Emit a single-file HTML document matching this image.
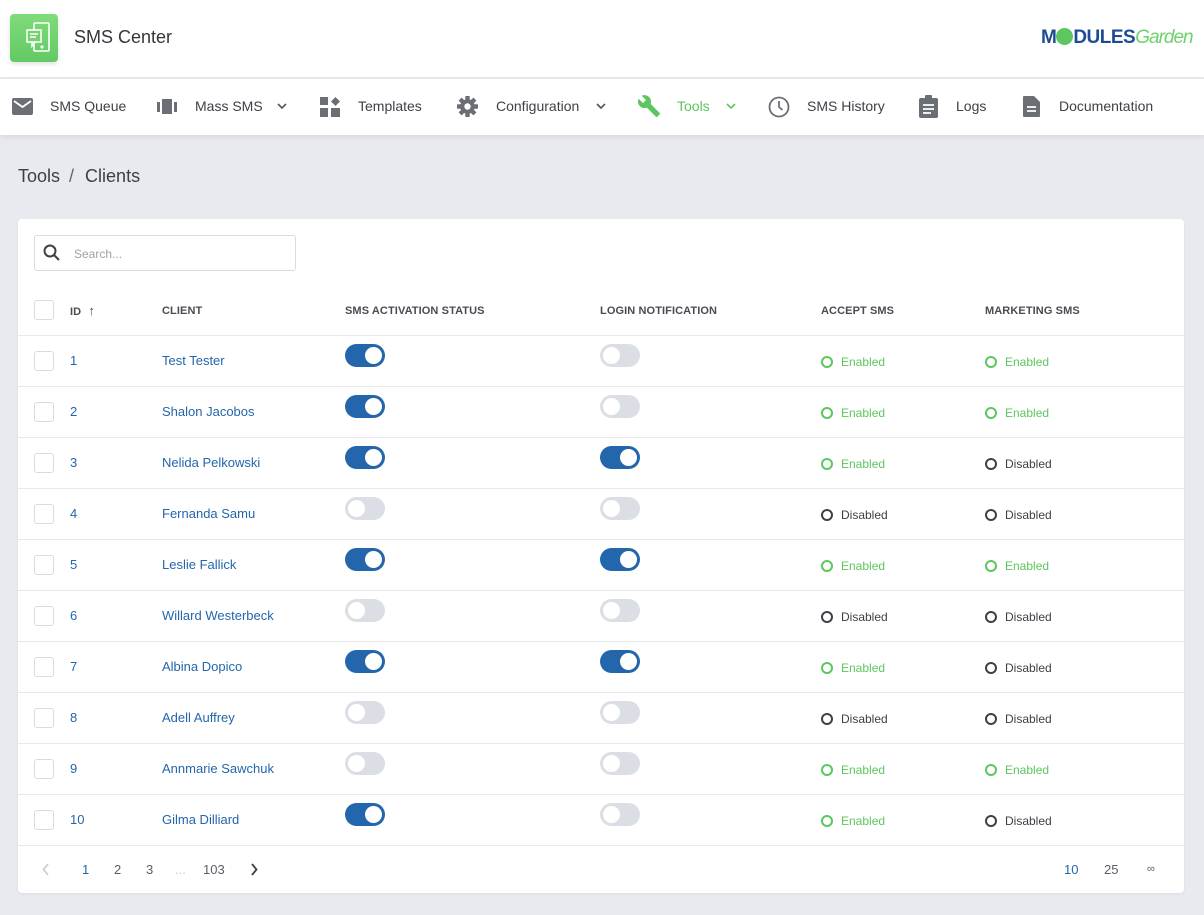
<!DOCTYPE html>
<html><head><meta charset="utf-8"><style>
*{box-sizing:border-box;margin:0;padding:0}
body{width:1204px;height:915px;background:#e9eaef;font-family:"Liberation Sans",Arial,sans-serif;position:relative;overflow:hidden;color:#3d4147}
.hdr{position:absolute;left:0;top:0;width:1204px;height:78px;background:#fff;border-bottom:1px solid #e8e9ec}
.nav{position:absolute;left:0;top:79px;width:1204px;height:56px;background:#fff;box-shadow:0 2px 6px rgba(0,0,0,.08)}
.ni{position:absolute;top:0;height:56px;line-height:54px;font-size:14px;color:#3d4147}
.ab{position:absolute}
.card{position:absolute;left:18px;top:219px;width:1166px;height:674px;background:#fff;border-radius:4px;box-shadow:0 1px 3px rgba(0,0,0,.06)}
.th{position:absolute;top:85px;font-size:11px;font-weight:bold;color:#484c53;letter-spacing:.1px;line-height:14px}
.cb{position:absolute;left:16px;width:20px;height:20px;border:1px solid #d9dbe0;border-radius:3px;background:#fff}
.row{position:absolute;left:0;width:1166px;height:51px;border-top:1px solid #e8e9ec}
.id{position:absolute;left:52px;top:17px;font-size:13px;color:#2466ab}
.cl{position:absolute;left:144px;top:17px;font-size:13px;color:#2466ab}
.tg{position:absolute;top:8px;width:40px;height:23px;border-radius:12px;background:#dcdee6}
.tg::after{content:"";position:absolute;top:3px;left:3px;width:17px;height:17px;border-radius:50%;background:#fff}
.tg.on{background:#2466ab}
.tg.on::after{left:20px}
.st{position:absolute;top:19px;font-size:12px;line-height:14px;padding-left:20px;color:#3d4147}
.st::before{content:"";position:absolute;left:0;top:1px;width:8px;height:8px;border:2px solid #3d4147;border-radius:50%}
.st.e{color:#5dc65f}.st.e::before{border-color:#5dc65f}
.pg{position:absolute;top:643px;font-size:13px;color:#5a5e66}
</style></head><body>
<div class="hdr">
 <div class="ab" style="left:10px;top:14px;width:48px;height:48px;border-radius:4px;background:linear-gradient(#7fdc7a,#62c964);box-shadow:0 2px 4px rgba(0,0,0,.12)">
  <svg width="48" height="48" viewBox="0 0 48 48" fill="none" stroke="#fff" stroke-width="1.6"><rect x="24" y="9" width="15" height="28" rx="1"/><rect x="17" y="16" width="14" height="12" fill="#72d36f"/><path d="M20 20h8M20 23h6M22 28v4l3-4"/><circle cx="32" cy="33" r=".8" fill="#fff"/></svg>
 </div>
 <div class="ab" style="left:74px;top:27px;font-size:18px;color:#33363b">SMS Center</div>
 <div class="ab" style="left:1041px;top:27px;font-size:19px;font-weight:bold;color:#1d4b94;letter-spacing:-0.5px;line-height:22px">M<span style="display:inline-block;width:17px;height:17px;border:3px solid #5dc65f;border-radius:50%;vertical-align:-2px;background:#5dc65f"></span>DULES<span style="font-weight:normal;font-style:italic;color:#6fd06e;letter-spacing:-1px">Garden</span></div>
</div>
<div class="nav">
 <svg class="ab" style="left:12px;top:19px" width="21" height="17" viewBox="0 0 21 17"><rect width="21" height="17" rx="2" fill="#6b6e75"/><path d="M2 3l8.5 6L19 3" stroke="#fff" stroke-width="1.8" fill="none"/></svg>
 <div class="ni" style="left:50px">SMS Queue</div>
 <svg class="ab" style="left:157px;top:20px" width="20" height="15"><rect x="0" y="3" width="3" height="10" fill="#6b6e75"/><rect x="5" y="0" width="10" height="15" fill="#6b6e75"/><rect x="17" y="3" width="3" height="10" fill="#6b6e75"/></svg>
 <div class="ni" style="left:195px">Mass SMS</div>
 <svg class="ab" style="left:277px;top:24px" width="10" height="7"><path d="M1 1l4 4 4-4" stroke="#555" stroke-width="1.6" fill="none"/></svg>
 <svg class="ab" style="left:320px;top:18px" width="20" height="20"><rect x="0" y="0" width="8" height="8" fill="#6b6e75"/><rect x="0" y="11" width="8" height="9" fill="#6b6e75"/><rect x="11" y="11" width="9" height="9" fill="#6b6e75"/><path d="M15.5 0l4.5 4.5-4.5 4.5-4.5-4.5z" fill="#6b6e75"/></svg>
 <div class="ni" style="left:358px">Templates</div>
 <svg class="ab" style="left:457px;top:17px" width="21" height="21" viewBox="0 0 21 21"><g fill="#6b6e75" transform="translate(10.5 10.5)"><circle r="7.3"/><rect x="-2.2" y="-10.5" width="4.4" height="21" rx=".6"/><rect x="-2.2" y="-10.5" width="4.4" height="21" rx=".6" transform="rotate(45)"/><rect x="-2.2" y="-10.5" width="4.4" height="21" rx=".6" transform="rotate(90)"/><rect x="-2.2" y="-10.5" width="4.4" height="21" rx=".6" transform="rotate(135)"/></g><circle cx="10.5" cy="10.5" r="3.2" fill="#fff"/></svg>
 <div class="ni" style="left:496px">Configuration</div>
 <svg class="ab" style="left:596px;top:24px" width="10" height="7"><path d="M1 1l4 4 4-4" stroke="#555" stroke-width="1.6" fill="none"/></svg>
 <svg class="ab" style="left:637px;top:15px" width="24" height="24" viewBox="0 0 24 24"><path fill="#5dc65f" d="M22.7 19l-9.1-9.1c.9-2.3.4-5-1.5-6.9-2-2-5-2.4-7.4-1.3L9 6 6 9 1.6 4.7C.4 7.1.9 10.1 2.9 12.1c1.9 1.9 4.6 2.4 6.9 1.5l9.1 9.1c.4.4 1 .4 1.4 0l2.3-2.3c.5-.4.5-1.100.1-1.4z"/></svg>
 <div class="ni" style="left:677px;color:#5dc65f">Tools</div>
 <svg class="ab" style="left:726px;top:24px" width="10" height="7"><path d="M1 1l4 4 4-4" stroke="#5dc65f" stroke-width="1.6" fill="none"/></svg>
 <svg class="ab" style="left:768px;top:17px" width="22" height="22"><circle cx="11" cy="11" r="9.5" stroke="#6b6e75" stroke-width="1.8" fill="none"/><path d="M11 5v6l3.5 3" stroke="#6b6e75" stroke-width="1.8" fill="none"/></svg>
 <div class="ni" style="left:807px">SMS History</div>
 <svg class="ab" style="left:919px;top:16px" width="19" height="23" viewBox="0 0 19 23"><rect x="0" y="3" width="19" height="20" rx="2" fill="#6b6e75"/><rect x="6" y="0" width="7" height="5" rx="1" fill="#6b6e75"/><path d="M4 10h11M4 14h11M4 18h8" stroke="#fff" stroke-width="1.8"/></svg>
 <div class="ni" style="left:956px">Logs</div>
 <svg class="ab" style="left:1023px;top:17px" width="17" height="21" viewBox="0 0 17 21"><path d="M0 1a1 1 0 011-1h10l6 6v14a1 1 0 01-1 1H1a1 1 0 01-1-1z" fill="#6b6e75"/><path d="M4 11h9M4 15h9" stroke="#fff" stroke-width="1.8"/></svg>
 <div class="ni" style="left:1059px">Documentation</div>
</div>
<div class="ab" style="left:18px;top:166px;font-size:18px;color:#3d4147">Tools <span style="margin:0 6px 0 4px;color:#666">/</span> Clients</div>
<div class="card">
 <div class="ab" style="left:16px;top:16px;width:262px;height:36px;border:1px solid #d9dbe0;border-radius:3px">
  <svg class="ab" style="left:8px;top:8px" width="18" height="18"><circle cx="7" cy="7" r="5.5" stroke="#3d4147" stroke-width="2" fill="none"/><path d="M11 11l5 5" stroke="#3d4147" stroke-width="2"/></svg>
  <div class="ab" style="left:39px;top:11px;font-size:12px;color:#a0a3a9">Search...</div>
 </div>
 <div class="cb" style="top:81px"></div>
 <div class="th" style="left:52px">ID <span style="font-weight:normal;font-size:13px;margin-left:4px">↑</span></div>
 <div class="th" style="left:144px">CLIENT</div>
 <div class="th" style="left:327px">SMS ACTIVATION STATUS</div>
 <div class="th" style="left:582px">LOGIN NOTIFICATION</div>
 <div class="th" style="left:803px">ACCEPT SMS</div>
 <div class="th" style="left:967px">MARKETING SMS</div>

 <div class="row" style="top:116px"><div class="cb" style="top:15px"></div><div class="id">1</div><div class="cl">Test Tester</div><div class="tg on" style="left:327px"></div><div class="tg" style="left:582px"></div><div class="st e" style="left:803px">Enabled</div><div class="st e" style="left:967px">Enabled</div></div>
 <div class="row" style="top:167px"><div class="cb" style="top:15px"></div><div class="id">2</div><div class="cl">Shalon Jacobos</div><div class="tg on" style="left:327px"></div><div class="tg" style="left:582px"></div><div class="st e" style="left:803px">Enabled</div><div class="st e" style="left:967px">Enabled</div></div>
 <div class="row" style="top:218px"><div class="cb" style="top:15px"></div><div class="id">3</div><div class="cl">Nelida Pelkowski</div><div class="tg on" style="left:327px"></div><div class="tg on" style="left:582px"></div><div class="st e" style="left:803px">Enabled</div><div class="st" style="left:967px">Disabled</div></div>
 <div class="row" style="top:269px"><div class="cb" style="top:15px"></div><div class="id">4</div><div class="cl">Fernanda Samu</div><div class="tg" style="left:327px"></div><div class="tg" style="left:582px"></div><div class="st" style="left:803px">Disabled</div><div class="st" style="left:967px">Disabled</div></div>
 <div class="row" style="top:320px"><div class="cb" style="top:15px"></div><div class="id">5</div><div class="cl">Leslie Fallick</div><div class="tg on" style="left:327px"></div><div class="tg on" style="left:582px"></div><div class="st e" style="left:803px">Enabled</div><div class="st e" style="left:967px">Enabled</div></div>
 <div class="row" style="top:371px"><div class="cb" style="top:15px"></div><div class="id">6</div><div class="cl">Willard Westerbeck</div><div class="tg" style="left:327px"></div><div class="tg" style="left:582px"></div><div class="st" style="left:803px">Disabled</div><div class="st" style="left:967px">Disabled</div></div>
 <div class="row" style="top:422px"><div class="cb" style="top:15px"></div><div class="id">7</div><div class="cl">Albina Dopico</div><div class="tg on" style="left:327px"></div><div class="tg on" style="left:582px"></div><div class="st e" style="left:803px">Enabled</div><div class="st" style="left:967px">Disabled</div></div>
 <div class="row" style="top:473px"><div class="cb" style="top:15px"></div><div class="id">8</div><div class="cl">Adell Auffrey</div><div class="tg" style="left:327px"></div><div class="tg" style="left:582px"></div><div class="st" style="left:803px">Disabled</div><div class="st" style="left:967px">Disabled</div></div>
 <div class="row" style="top:524px"><div class="cb" style="top:15px"></div><div class="id">9</div><div class="cl">Annmarie Sawchuk</div><div class="tg" style="left:327px"></div><div class="tg" style="left:582px"></div><div class="st e" style="left:803px">Enabled</div><div class="st e" style="left:967px">Enabled</div></div>
 <div class="row" style="top:575px;height:52px;border-bottom:1px solid #e8e9ec"><div class="cb" style="top:15px"></div><div class="id">10</div><div class="cl">Gilma Dilliard</div><div class="tg on" style="left:327px"></div><div class="tg" style="left:582px"></div><div class="st e" style="left:803px">Enabled</div><div class="st" style="left:967px">Disabled</div></div>

 <svg class="ab" style="left:24px;top:644px" width="8" height="13"><path d="M6 1L1.5 6.5 6 12" stroke="#c8cad0" stroke-width="1.6" fill="none"/></svg>
 <div class="pg" style="left:64px;color:#2466ab">1</div>
 <div class="pg" style="left:96px">2</div>
 <div class="pg" style="left:128px">3</div>
 <div class="pg" style="left:157px;color:#c8cad0">...</div>
 <div class="pg" style="left:185px">103</div>
 <svg class="ab" style="left:232px;top:644px" width="8" height="13"><path d="M2 1l4.5 5.5L2 12" stroke="#3d4147" stroke-width="1.8" fill="none"/></svg>
 <div class="pg" style="left:1046px;color:#2466ab">10</div>
 <div class="pg" style="left:1086px">25</div>
 <div class="pg" style="left:1129px;font-size:11px;top:644px">∞</div>
</div>
</body></html>
